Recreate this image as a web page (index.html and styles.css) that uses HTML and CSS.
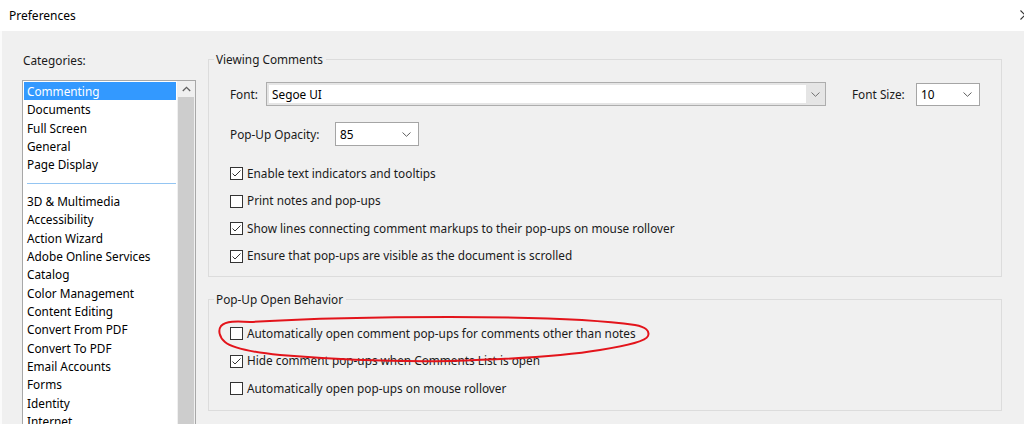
FILE: index.html
```html
<!DOCTYPE html>
<html>
<head>
<meta charset="utf-8">
<title>Preferences</title>
<link rel="stylesheet" href="styles.css">
</head>
<body>
<div class="window">
  <div class="titlebar">
    <span class="title">Preferences</span>
    <svg class="close" width="10" height="10" viewBox="0 0 10 10"><path d="M0.5 0.5 L9.5 9.5 M9.5 0.5 L0.5 9.5" stroke="#333" stroke-width="1.1" fill="none"/></svg>
  </div>
  <div class="main">
    <div class="left">
      <div class="cat-label">Categories:</div>
      <div class="listbox">
        <ul class="items">
          <li class="item selected">Commenting</li>
          <li class="item">Documents</li>
          <li class="item">Full Screen</li>
          <li class="item">General</li>
          <li class="item">Page Display</li>
          <li class="sep"><span></span></li>
          <li class="item">3D &amp; Multimedia</li>
          <li class="item">Accessibility</li>
          <li class="item">Action Wizard</li>
          <li class="item">Adobe Online Services</li>
          <li class="item">Catalog</li>
          <li class="item">Color Management</li>
          <li class="item">Content Editing</li>
          <li class="item">Convert From PDF</li>
          <li class="item">Convert To PDF</li>
          <li class="item">Email Accounts</li>
          <li class="item">Forms</li>
          <li class="item">Identity</li>
          <li class="item">Internet</li>
        </ul>
        <div class="scrollbar">
          <div class="sb-arrow">
            <svg width="9" height="6" viewBox="0 0 9 6"><path d="M0.8 5 L4.5 1.3 L8.2 5" stroke="#606060" stroke-width="1.3" fill="none"/></svg>
          </div>
          <div class="sb-thumb"></div>
        </div>
      </div>
    </div>
    <div class="right">
      <fieldset class="group group-view">
        <legend>Viewing Comments</legend>
        <div class="group-body body-view">
          <div class="row-font">
            <span class="lbl lbl-font">Font:</span>
            <div class="combo combo-font">
              <div class="combo-field">Segoe UI</div>
              <div class="combo-btn">
                <svg width="9" height="5" viewBox="0 0 9 5"><path d="M0.5 0.5 L4.5 4.3 L8.5 0.5" stroke="#707070" stroke-width="1" fill="none"/></svg>
              </div>
            </div>
            <span class="lbl lbl-size">Font Size:</span>
            <div class="select select-size">
              <span>10</span>
              <svg width="9" height="5" viewBox="0 0 9 5"><path d="M0.5 0.5 L4.5 4.3 L8.5 0.5" stroke="#606060" stroke-width="1" fill="none"/></svg>
            </div>
          </div>
          <div class="row-opacity">
            <span class="lbl lbl-opacity">Pop-Up Opacity:</span>
            <div class="select select-opacity">
              <span>85</span>
              <svg width="9" height="5" viewBox="0 0 9 5"><path d="M0.5 0.5 L4.5 4.3 L8.5 0.5" stroke="#606060" stroke-width="1" fill="none"/></svg>
            </div>
          </div>
          <div class="checks checks-view">
            <label class="check"><span class="box checked"><svg width="11" height="11" viewBox="0 0 11 11"><path d="M1.5 5.5 L4 8 L9.5 2.5" stroke="#333" stroke-width="1" fill="none"/></svg></span>Enable text indicators and tooltips</label>
            <label class="check"><span class="box"></span>Print notes and pop-ups</label>
            <label class="check"><span class="box checked"><svg width="11" height="11" viewBox="0 0 11 11"><path d="M1.5 5.5 L4 8 L9.5 2.5" stroke="#333" stroke-width="1" fill="none"/></svg></span>Show lines connecting comment markups to their pop-ups on mouse rollover</label>
            <label class="check"><span class="box checked"><svg width="11" height="11" viewBox="0 0 11 11"><path d="M1.5 5.5 L4 8 L9.5 2.5" stroke="#333" stroke-width="1" fill="none"/></svg></span>Ensure that pop-ups are visible as the document is scrolled</label>
          </div>
        </div>
      </fieldset>
      <fieldset class="group group-open">
        <legend>Pop-Up Open Behavior</legend>
        <div class="group-body body-open">
          <div class="checks">
            <label class="check"><span class="box"></span>Automatically open comment pop-ups for comments other than notes</label>
            <label class="check"><span class="box checked"><svg width="11" height="11" viewBox="0 0 11 11"><path d="M1.5 5.5 L4 8 L9.5 2.5" stroke="#333" stroke-width="1" fill="none"/></svg></span>Hide comment pop-ups when Comments List is open</label>
            <label class="check"><span class="box"></span>Automatically open pop-ups on mouse rollover</label>
          </div>
        </div>
      </fieldset>
    </div>
  </div>
  <svg class="annotation" width="450" height="56" viewBox="210 312 450 56">
    <path d="M221 326 C226 321 236 321 250 322 C300 319 380 317 450 317 C530 317 600 320 635 325 C646 327 650 331 648 336 C646 341 630 345 600 350 C570 355 520 359 450 361 C400 362 330 359 280 355 C250 352 232 348 225 342 C219 337 218 330 221 326 Z" stroke="#e3141b" stroke-width="2" fill="none" stroke-linejoin="round"/>
  </svg>
</div>
</body>
</html>
```

FILE: styles.css
```css
* {
  box-sizing: border-box;
}

html, body {
  margin: 0;
  padding: 0;
}

body {
  width: 1024px;
  height: 424px;
  overflow: hidden;
  background: #f0f0f0;
  font-family: "Noto Sans", "Open Sans", sans-serif;
  font-size: 11.8px;
  color: #1a1a1a;
}

.window {
  position: relative;
  width: 1024px;
  height: 424px;
  overflow: hidden;
}

.titlebar {
  height: 31px;
  background: #ffffff;
  display: flex;
  align-items: center;
  justify-content: space-between;
  padding-left: 9px;
}

.title {
  font-size: 12px;
  color: #000;
  margin-top: -1px;
}

.close {
  margin-right: -6px;
  margin-top: -2px;
}

.main {
  display: flex;
  height: 393px;
  border-left: 2px solid #fbfbfb;
}

/* Left column */
.left {
  width: 206px;
  flex-shrink: 0;
  padding-left: 20px;
  display: flex;
  flex-direction: column;
}

.cat-label {
  flex-shrink: 0;
  height: 49px;
  padding-top: 20px;
  padding-left: 1px;
  line-height: 18px;
  color: #1a1a1a;
}

.listbox {
  width: 174px;
  flex: 1;
  min-height: 0;
  overflow: hidden;
  display: flex;
  background: #ffffff;
  border: 1px solid #a8a8a8;
  border-bottom: none;
}

.items {
  list-style: none;
  margin: 0;
  padding: 1px 0 0 1px;
  width: 154px;
  flex-shrink: 0;
}

.item {
  height: 18.33px;
  line-height: 18.33px;
  width: 152px;
  padding-left: 3px;
  color: #000;
  white-space: nowrap;
}

.item.selected {
  background: #3399ff;
  color: #ffffff;
}

.sep {
  height: 18.33px;
  display: flex;
  align-items: center;
  padding-left: 3px;
  width: 152px;
}

.sep span {
  display: block;
  width: 149px;
  height: 1px;
  background: #94c5f2;
  margin-top: 1px;
}

.scrollbar {
  width: 18px;
  flex-shrink: 0;
  background: #f0f0f0;
  display: flex;
  flex-direction: column;
  align-items: center;
}

.sb-arrow {
  height: 16px;
  width: 18px;
  display: flex;
  align-items: center;
  justify-content: center;
}

.sb-thumb {
  flex: 1;
  width: 16px;
  background: #cdcdcd;
}

/* Right column */
.right {
  padding-top: 20px;
  display: flex;
  flex-direction: column;
}

.group {
  margin: 0;
  padding: 0;
  border: 1px solid #dcdcdc;
  width: 794px;
  min-width: 0;
}

.group legend {
  margin-left: 5px;
  padding: 0 3px 0 2px;
  line-height: 16px;
  color: #1a1a1a;
}

.group-open {
  margin-top: 14px;
}

.group-body {
  padding-left: 21px;
}

.body-view {
  padding-top: 15px;
  padding-bottom: 7px;
}

.body-open {
  padding-top: 12px;
  padding-bottom: 8px;
}

.row-font {
  display: flex;
  align-items: center;
  height: 24px;
}

.lbl {
  white-space: nowrap;
}

.lbl-font {
  width: 36px;
}

.lbl-size {
  margin-left: 26px;
  width: 64px;
}

.lbl-opacity {
  width: 105px;
}

.combo {
  display: flex;
  height: 24px;
  background: #e5e5e5;
  border: 1px solid #adadad;
}

.combo-font {
  width: 560px;
  padding: 2px 0 2px 2px;
}

.combo-field {
  flex: 1;
  background: #ffffff;
  padding-left: 3px;
  line-height: 18px;
  color: #000;
}

.combo-btn {
  width: 19px;
  display: flex;
  align-items: center;
  justify-content: center;
}

.select {
  display: flex;
  align-items: center;
  justify-content: space-between;
  background: #ffffff;
  border: 1px solid #a5a5a5;
  padding: 0 7px 0 4px;
  color: #000;
}

.select-size {
  width: 64px;
  height: 23px;
}

.row-opacity {
  display: flex;
  align-items: center;
  margin-top: 16px;
  height: 24px;
}

.select-opacity {
  width: 84px;
  height: 24px;
}

.checks-view {
  margin-top: 13px;
}

.check {
  display: flex;
  align-items: center;
  height: 27.5px;
  white-space: nowrap;
  color: #1a1a1a;
}

.box {
  width: 13px;
  height: 13px;
  border: 1px solid #333333;
  background: #ffffff;
  margin-right: 4px;
  margin-top: 2px;
  display: flex;
  align-items: center;
  justify-content: center;
}

.annotation {
  position: absolute;
  left: 210px;
  top: 312px;
  pointer-events: none;
}
```
